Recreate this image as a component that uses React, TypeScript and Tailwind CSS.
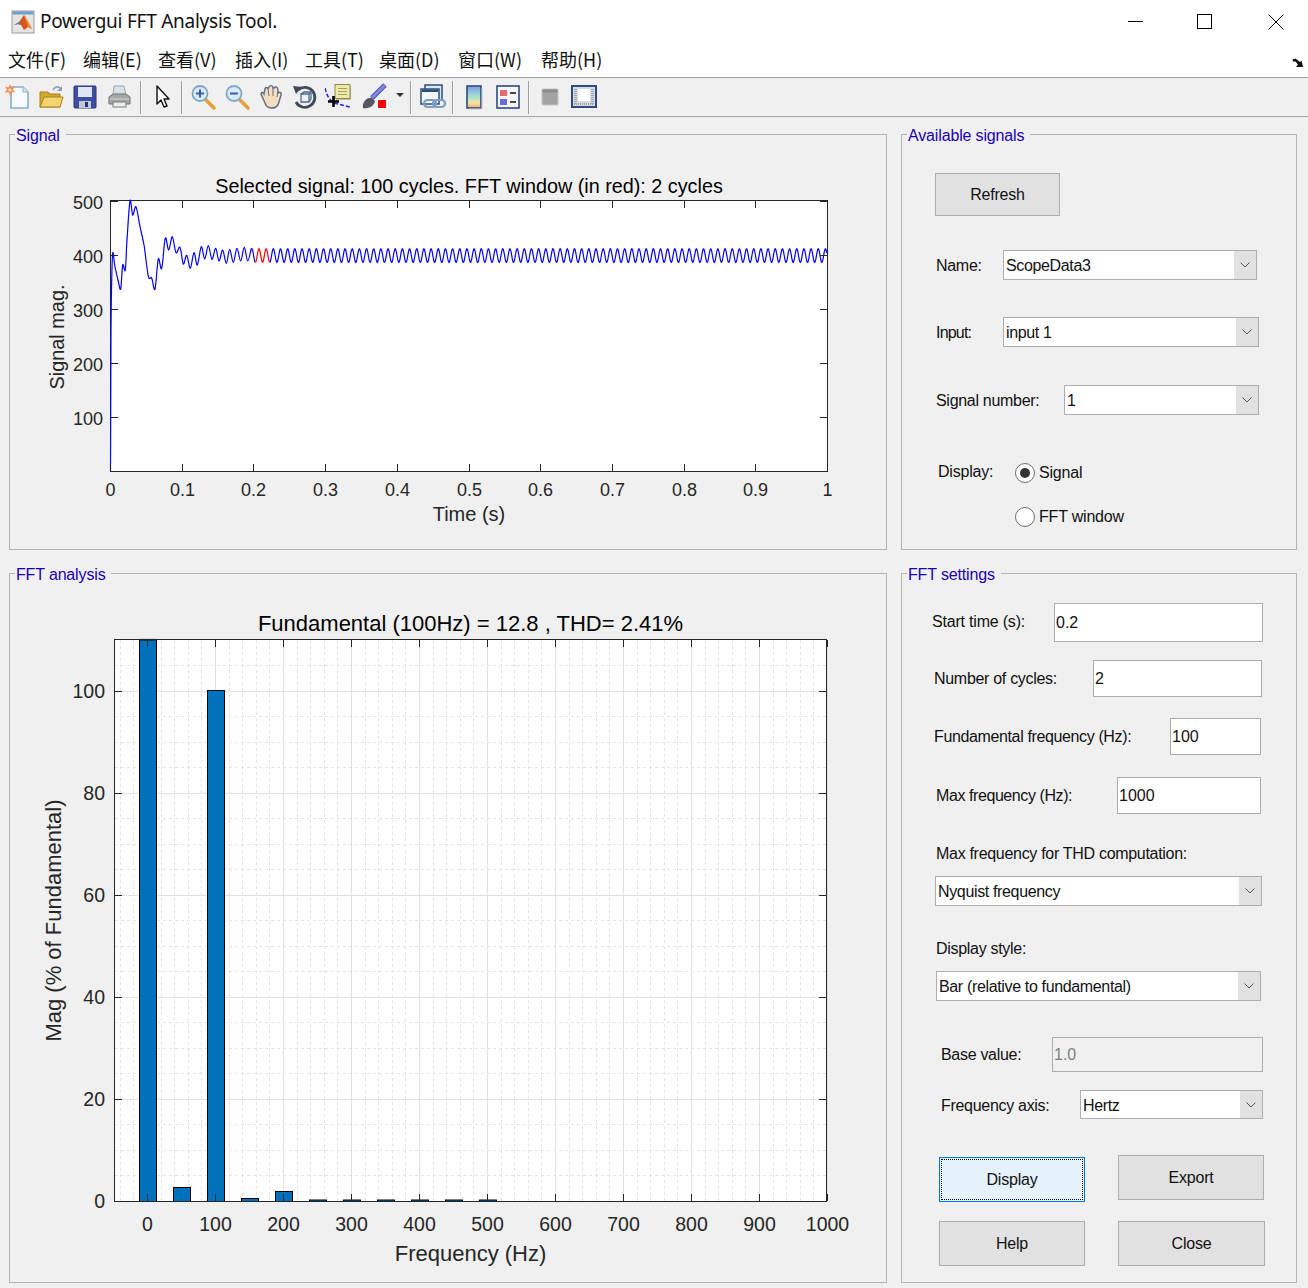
import type { ReactNode } from 'react'

const MENUS = [
  { texto: '文件(F)', ancho: 'w-[75px]' },
  { texto: '编辑(E)', ancho: 'w-[75px]' },
  { texto: '查看(V)', ancho: 'w-[77px]' },
  { texto: '插入(I)', ancho: 'w-[70px]' },
  { texto: '工具(T)', ancho: 'w-[74px]' },
  { texto: '桌面(D)', ancho: 'w-[79px]' },
  { texto: '窗口(W)', ancho: 'w-[83px]' },
  { texto: '帮助(H)', ancho: 'w-[70px]' },
]

function Logo() {
  return (
    <svg width="24" height="24" viewBox="0 0 24 24">
      <rect x="1" y="1" width="22" height="22" fill="#e4e4e4" stroke="#9a9a9a" />
      <rect x="1.5" y="1.5" width="21" height="3" fill="#6f9fc8" />
      <path d="M3 15 L8 12 L13 5 L16 10 L21 19 L17 17 L13 20 L10 15 L7 14 Z" fill="#d9531e" />
      <path d="M3 15 L8 12 L10 15 L7 14 Z" fill="#3d8fc4" />
      <path d="M13 5 L16 10 L21 19 L17 17 Z" fill="#f08c24" />
    </svg>
  )
}

function WindowButtons() {
  return (
    <div className="flex">
      <svg width="16" height="16" viewBox="0 0 16 16" className="mr-[53px] mt-[13px]">
        <path d="M0 8.5 H15" stroke="#000" />
      </svg>
      <svg width="16" height="16" viewBox="0 0 16 16" className="mr-[55px] mt-[14px]">
        <rect x="0.5" y="0.5" width="14" height="14" fill="none" stroke="#000" />
      </svg>
      <svg width="16" height="16" viewBox="0 0 16 16" className="mt-[14px]">
        <path d="M0.5 0.5 L15.5 15.5 M15.5 0.5 L0.5 15.5" stroke="#000" />
      </svg>
    </div>
  )
}

// iconos de la barra: todos en una caja de 28x28
const ICONS: Record<string, ReactNode> = {
  nuevo: (
    <>
      <path d="M8 4 H20 L25 9 V25 H8 Z" fill="#f7fbff" stroke="#88aecd" strokeWidth="1.6" />
      <path d="M20 4 V9 H25" fill="#d8e8f4" stroke="#88aecd" />
      <path d="M7 1 L8.5 4.5 L12 3.5 L10 6.5 L12.5 9.5 L9 9 L7 13 L5.5 9 L1.5 10 L4 6.5 L2 3.5 L5.5 4.5 Z" fill="#ef8f58" />
      <circle cx="7" cy="7" r="1.6" fill="#fbe3c8" />
    </>
  ),
  abrir: (
    <>
      <path d="M16 7 C18 3 22 3 24 6" fill="none" stroke="#8aa2b4" strokeWidth="1.6" />
      <path d="M25 3 V8 H20 Z" fill="#8aa2b4" />
      <path d="M3 9 H11 L13 11 H23 V24 H3 Z" fill="#d6a92e" stroke="#a47f1c" />
      <path d="M3 24 L7 14 H26 L23 24 Z" fill="#f3d36d" stroke="#a47f1c" />
    </>
  ),
  guardar: (
    <>
      <rect x="3" y="3" width="22" height="22" rx="1" fill="#3f4ea5" stroke="#2a3478" />
      <rect x="7" y="4" width="14" height="10" fill="#dfe5f3" />
      <rect x="8" y="18" width="12" height="7" fill="#c2c6d6" />
      <rect x="14" y="19" width="3" height="5" fill="#2a3478" />
    </>
  ),
  imprimir: (
    <>
      <path d="M9 3 H19 L21 12 H8 Z" fill="#d8e2ea" stroke="#9aa6ae" />
      <path d="M4 14 L8 11 H21 L25 14 V21 H4 Z" fill="#a5a8a8" stroke="#6f7272" />
      <rect x="8" y="19" width="13" height="5" fill="#ececec" stroke="#7c7c7c" />
      <path d="M5 16 H24" stroke="#d7d7d7" />
    </>
  ),
  puntero: (
    <path
      d="M9 3 V21 L13 17 L16 24 L19 23 L16 16 L21 16 Z"
      fill="#fff"
      stroke="#111"
      strokeWidth="1.4"
      strokeLinejoin="round"
    />
  ),
  zoomMas: (
    <>
      <path d="M17 17 L25 25" stroke="#e5a03c" strokeWidth="3.6" strokeLinecap="round" />
      <circle cx="11" cy="10.5" r="7.5" fill="#d9ebf7" stroke="#7fa9c6" strokeWidth="1.8" />
      <path d="M7 10.5 H15 M11 6.5 V14.5" stroke="#3a5fa8" strokeWidth="2" />
    </>
  ),
  zoomMenos: (
    <>
      <path d="M17 17 L25 25" stroke="#e5a03c" strokeWidth="3.6" strokeLinecap="round" />
      <circle cx="11" cy="10.5" r="7.5" fill="#d9ebf7" stroke="#7fa9c6" strokeWidth="1.8" />
      <path d="M7 10.5 H15" stroke="#3a5fa8" strokeWidth="2" />
    </>
  ),
  mano: (
    <>
      <path
        d="M4 11 C4 9 6 9 7 11 L8 6 C8 4 11 4 11 6 L12 4 C13 2 16 2 16 5 L17 5 C18 3 21 4 21 7 L21 10 C22 9 25 9 24 12 L22 19 C21 24 18 25 15 25 C11 25 9 23 8 20 Z"
        fill="#f7dcc4"
        stroke="#5c6f80"
        strokeWidth="1.4"
      />
      <path d="M11 6 L12 13 M16 5 L16 13 M21 8 L20 14" stroke="#5c6f80" />
    </>
  ),
  rotar: (
    <>
      <path d="M7 7 A10 10 0 1 1 5 19" fill="none" stroke="#3e4a58" strokeWidth="2.8" />
      <path d="M2 3 L11 4 L5 11 Z" fill="#3e4a58" />
      <path d="M10 11 H18 V19 H10 Z M10 11 L13 9 H20 L18 11 M20 9 V16 L18 19" fill="none" stroke="#4c6a8c" strokeWidth="1.3" />
    </>
  ),
  dato: (
    <>
      <path d="M0 5 C2 14 6 20 13 21 L25 24" fill="none" stroke="#2222ee" strokeWidth="1.5" strokeDasharray="4 2" />
      <rect x="11" y="3" width="15" height="14" fill="#8d8a50" opacity="0.5" />
      <rect x="10" y="1.5" width="15" height="14" fill="#efe9a8" stroke="#8d8a50" />
      <path d="M13 5.5 H22 M13 8.5 H22 M13 11.5 H22" stroke="#a6a36c" />
      <path d="M3 18.5 H14 M8.5 13 V24" stroke="#000" strokeWidth="2.6" />
    </>
  ),
  pincel: (
    <>
      <path d="M24 2 L11 15" stroke="#4a52a8" strokeWidth="5" />
      <path d="M24 2 L11 15" stroke="#8189e0" strokeWidth="3" />
      <path d="M2 25 C1 19 6 14 11 15 L14 18 C13 23 8 26 2 25 Z" fill="#55595f" />
      <rect x="16.5" y="16.5" width="9" height="9" fill="#ff0000" stroke="#fff" />
    </>
  ),
  enlace: (
    <>
      <rect x="7" y="2" width="17" height="15" fill="#dfe7f0" stroke="#2c4f80" strokeWidth="1.5" />
      <rect x="3" y="6" width="18" height="15" fill="#f5f7fa" stroke="#2c4f80" strokeWidth="1.5" />
      <path d="M4 6.5 H20 V9 H4 Z" fill="#2c4f80" />
      <rect x="6" y="17" width="12" height="7" rx="3.5" fill="none" stroke="#7c9dbd" strokeWidth="2.2" />
      <rect x="15" y="17" width="12" height="7" rx="3.5" fill="none" stroke="#7c9dbd" strokeWidth="2.2" />
    </>
  ),
  barraColor: (
    <>
      <defs>
        <linearGradient id="escala" x1="0" y1="0" x2="0" y2="1">
          <stop offset="0" stopColor="#7f9be0" />
          <stop offset="0.45" stopColor="#9fe0d8" />
          <stop offset="0.75" stopColor="#f0e6a0" />
          <stop offset="1" stopColor="#f0a878" />
        </linearGradient>
      </defs>
      <rect x="7" y="3" width="14" height="22" fill="url(#escala)" stroke="#2c4a80" strokeWidth="1.6" />
      <path d="M22 5 V26 H9" fill="none" stroke="#c0c4cc" />
    </>
  ),
  leyenda: (
    <>
      <rect x="3" y="3" width="22" height="22" fill="#f5f7fa" stroke="#2c4a80" strokeWidth="1.6" />
      <rect x="6" y="7" width="7" height="6" fill="#e86a6a" />
      <rect x="6" y="16" width="7" height="6" fill="#6a6ae8" />
      <path d="M16 10 H22 M16 19 H22" stroke="#111" strokeWidth="1.6" />
    </>
  ),
  ocultar: (
    <>
      <rect x="6" y="6" width="16" height="16" rx="1" fill="#a3a3a3" stroke="#c4c4c4" />
      <rect x="6.5" y="6.5" width="15" height="3" fill="#8c8c8c" />
    </>
  ),
  acoplar: (
    <>
      <rect x="2" y="3" width="24" height="21" fill="#d8dbe0" stroke="#2c4a80" strokeWidth="2" />
      <rect x="8" y="6" width="12" height="12" fill="#fff" />
      <path d="M5.5 6 V21 M22.5 6 V21" stroke="#9ea3a8" strokeDasharray="1 1" strokeWidth="3" />
      <path d="M4 21 H24" stroke="#9ea3a8" strokeDasharray="1 1" strokeWidth="2" />
    </>
  ),
}

function Herramienta({ nombre }: { nombre: string }) {
  return (
    <div className="flex w-[34px] items-center justify-center">
      <svg width="28" height="28" viewBox="0 0 28 28">
        {ICONS[nombre]}
      </svg>
    </div>
  )
}

function Separador({ className }: { className: string }) {
  return <div className={`h-[33px] w-[2px] self-center border-l border-[#a0a0a0] bg-[#f8f8f8] ${className}`} />
}

function Toolbar() {
  return (
    <div className="flex h-[40px] border-y border-[#a3a3a3] bg-[#f0f0f0]">
      <Herramienta nombre="nuevo" />
      <Herramienta nombre="abrir" />
      <Herramienta nombre="guardar" />
      <Herramienta nombre="imprimir" />
      <Separador className="ml-[4px] mr-[3px]" />
      <Herramienta nombre="puntero" />
      <Separador className="ml-[2px] mr-[3px]" />
      <Herramienta nombre="zoomMas" />
      <Herramienta nombre="zoomMenos" />
      <Herramienta nombre="mano" />
      <Herramienta nombre="rotar" />
      <Herramienta nombre="dato" />
      <div className="ml-[2px] flex">
        <Herramienta nombre="pincel" />
      </div>
      <div className="flex w-[16px] items-center justify-center">
        <div className="mb-[4px] h-0 w-0 border-x-[4px] border-t-[4px] border-x-transparent border-t-[#333]" />
      </div>
      <Separador className="ml-[2px] mr-[3px]" />
      <Herramienta nombre="enlace" />
      <Separador className="ml-[3px] mr-[3px]" />
      <Herramienta nombre="barraColor" />
      <Herramienta nombre="leyenda" />
      <Separador className="ml-[3px] mr-[3px]" />
      <Herramienta nombre="ocultar" />
      <Herramienta nombre="acoplar" />
    </div>
  )
}

function Panel({ titulo, className, children }: { titulo: string; className: string; children: ReactNode }) {
  return (
    <fieldset className={`border border-[#b4b4b4] ${className}`}>
      <legend className="relative top-[2px] ml-[5px] pl-[1px] pr-[6px] text-[16px] leading-[20px] tracking-[-0.15px] text-[#1a00b4]">
        {titulo}
      </legend>
      {children}
    </fieldset>
  )
}

function Seleccion({ valor, className }: { valor: string; className: string }) {
  return (
    <div className={`flex border border-[#adadad] bg-white ${className}`}>
      <span className="flex-1 pl-[2px] text-[16px] leading-[29px] tracking-[-0.35px]">{valor}</span>
      <span className="flex w-[22px] items-center justify-center bg-[#e1e1e1]">
        <svg width="12" height="8" viewBox="0 0 12 8">
          <path d="M1.5 1.5 L6 6 L10.5 1.5" fill="none" stroke="#555" />
        </svg>
      </span>
    </div>
  )
}

function Entrada({ valor, className }: { valor: string; className: string }) {
  return <div className={`flex items-center border border-[#adadad] bg-white pl-[1px] text-[16px] tracking-normal ${className}`}>{valor}</div>
}

function Boton({ texto, className }: { texto: string; className: string }) {
  return (
    <div className={`flex items-center justify-center border border-[#adadad] bg-[#e1e1e1] text-[16px] tracking-[-0.2px] ${className}`}>
      {texto}
    </div>
  )
}

function Radio({ activo, texto, className }: { activo: boolean; texto: string; className: string }) {
  return (
    <div className={`flex h-[20px] items-center gap-[4px] text-[16px] leading-[20px] tracking-[-0.2px] ${className}`}>
      <span className="flex h-[20px] w-[20px] items-center justify-center rounded-full border border-[#6e6e6e] bg-white">
        {activo && <span className="h-[10px] w-[10px] rounded-full bg-[#333]" />}
      </span>
      <span>{texto}</span>
    </div>
  )
}

function AvailableSignals() {
  return (
    <Panel titulo="Available signals" className="h-[426px] w-[396px]">
      <Boton texto="Refresh" className="ml-[33px] mt-[29px] h-[43px] w-[125px]" />
      <div className="mt-[34px] flex h-[30px] items-center pl-[34px] text-[16px] tracking-[-0.3px]">
        <span className="w-[67px] pt-[2px]">Name:</span>
        <Seleccion valor="ScopeData3" className="h-full w-[254px]" />
      </div>
      <div className="mt-[37px] flex h-[30px] items-center pl-[34px] text-[16px] tracking-[-0.3px]">
        <span className="w-[67px] pt-[2px] tracking-[-0.8px]">Input:</span>
        <Seleccion valor="input 1" className="h-full w-[256px]" />
      </div>
      <div className="mt-[38px] flex h-[30px] items-center pl-[34px] text-[16px] tracking-[-0.3px]">
        <span className="w-[128px] pt-[2px]">Signal number:</span>
        <Seleccion valor="1" className="h-full w-[195px]" />
      </div>
      <div className="mt-[48px] flex items-start pl-[36px] text-[16px] tracking-[-0.2px]">
        <span className="w-[77px] leading-[18px]">Display:</span>
        <Radio activo texto="Signal" className="" />
      </div>
      <Radio activo={false} texto="FFT window" className="ml-[113px] mt-[24px]" />
    </Panel>
  )
}

function FftSettings() {
  return (
    <Panel titulo="FFT settings" className="h-[720px] w-[396px] text-[16px]">
      <div className="tracking-[-0.3px]">
        <div className="mt-[20px] flex h-[39px] items-center pl-[30px]">
          <span className="w-[122px] pb-[2px] tracking-[-0.2px]">Start time (s):</span>
          <Entrada valor="0.2" className="h-full w-[209px]" />
        </div>
        <div className="mt-[18px] flex h-[37px] items-center pl-[32px]">
          <span className="w-[159px]">Number of cycles:</span>
          <Entrada valor="2" className="h-full w-[169px]" />
        </div>
        <div className="mt-[21px] flex h-[37px] items-center pl-[32px]">
          <span className="w-[236px] tracking-[-0.37px]">Fundamental frequency (Hz):</span>
          <Entrada valor="100" className="h-full w-[91px]" />
        </div>
        <div className="mt-[22px] flex h-[37px] items-center pl-[34px]">
          <span className="w-[181px] tracking-[-0.42px]">Max frequency (Hz):</span>
          <Entrada valor="1000" className="h-full w-[144px]" />
        </div>
        <div className="mt-[30px] h-[20px] pl-[34px] leading-[20px]">Max frequency for THD computation:</div>
        <Seleccion valor="Nyquist frequency" className="ml-[33px] mt-[12px] h-[30px] w-[327px]" />
        <div className="mt-[33px] h-[20px] pl-[34px] leading-[20px]">Display style:</div>
        <Seleccion valor="Bar (relative to fundamental)" className="ml-[34px] mt-[12px] h-[30px] w-[325px]" />
        <div className="mt-[36px] flex h-[35px] items-center pl-[39px]">
          <span className="w-[111px]">Base value:</span>
          <div className="flex h-full w-[211px] items-center border border-[#adadad] pl-[1px] tracking-normal text-[#808080]">1.0</div>
        </div>
        <div className="mt-[18px] flex h-[29px] items-center pl-[39px]">
          <span className="w-[139px] pt-[3px]">Frequency axis:</span>
          <Seleccion valor="Hertz" className="h-full w-[183px]" />
        </div>
      </div>
      <div className="mt-[36px] flex items-start">
        <div className="ml-[37px] mt-[2px] flex h-[45px] w-[146px] items-center justify-center border border-[#0078d7] bg-[#e5f1fb] tracking-[-0.2px] outline-1 outline-offset-[-3px] outline-black outline-dotted">
          Display
        </div>
        <Boton texto="Export" className="ml-[33px] h-[45px] w-[146px]" />
      </div>
      <div className="mt-[19px] flex items-start">
        <Boton texto="Help" className="ml-[37px] h-[45px] w-[146px]" />
        <Boton texto="Close" className="ml-[33px] h-[45px] w-[147px]" />
      </div>
    </Panel>
  )
}

const TINTA = '#262626'

// puntos del transitorio leídos de la captura, en coordenadas de página
const TRANSITORIO: [number, number][] = [
  [111, 330], [111.5, 290], [112.7, 253], [115, 267], [118, 280], [120.7, 289], [122.7, 265], [125.3, 270], [127, 240],
  [130, 200.7], [132.7, 215], [136, 206.7], [140, 226.7], [144, 245], [148.3, 276], [151.7, 278], [155, 289],
  [158.3, 259], [161.7, 268.3], [165.3, 238.3], [168.7, 250], [172.3, 236.7], [176, 252.7], [180, 247.3], [183.3, 264],
  [186.7, 255.3], [190.3, 268.3], [194, 252.7], [197.3, 265], [201.3, 246.7], [204.7, 259], [208.3, 245.7], [212, 259.3],
  [215.7, 248.3], [219, 261], [222.7, 250], [226.3, 263.3], [229.7, 249.3], [233.3, 262.3], [237, 248.3], [240.7, 261],
  [244.3, 247.3], [247.7, 261], [251.3, 248.3],
]

function onda(desde: number, hasta: number) {
  const puntos: string[] = []
  for (let x = desde; x <= hasta; x += 0.5) {
    const y = 255.6 - 6.8 * Math.cos((2 * Math.PI * (x - 259)) / 7.17)
    puntos.push(`${x},${y.toFixed(2)}`)
  }
  return puntos
}

function curvaSuave(pts: [number, number][]) {
  let d = `M110.5 471 L${pts[0][0]} ${pts[0][1]}`
  for (let i = 0; i < pts.length - 1; i++) {
    const p0 = pts[Math.max(i - 1, 0)]
    const p1 = pts[i]
    const p2 = pts[i + 1]
    const p3 = pts[Math.min(i + 2, pts.length - 1)]
    const c1x = p1[0] + (p2[0] - p0[0]) / 6
    const c1y = p1[1] + (p2[1] - p0[1]) / 6
    const c2x = p2[0] - (p3[0] - p1[0]) / 6
    const c2y = p2[1] - (p3[1] - p1[1]) / 6
    d += ` C${c1x.toFixed(1)} ${c1y.toFixed(1)} ${c2x.toFixed(1)} ${c2y.toFixed(1)} ${p2[0]} ${p2[1]}`
  }
  return d
}

function SignalChart() {
  const xs = [0, 0.1, 0.2, 0.3, 0.4, 0.5, 0.6, 0.7, 0.8, 0.9, 1]
  const ys = [500, 400, 300, 200, 100]
  const px = (v: number) => Math.round(110 + v * 717) + 0.5
  const py = (v: number) => Math.round(201 + (500 - v) * 0.54) + 0.5
  return (
    <svg width="875" height="404" viewBox="10 144 875 404">
      <rect x="110.5" y="200.5" width="717" height="271" fill="#fff" stroke={TINTA} />
      <path d={curvaSuave(TRANSITORIO)} fill="none" stroke="#0000ff" strokeWidth="1.2" />
      <polyline points={onda(251.3, 255.4).join(' ')} fill="none" stroke="#0000ff" strokeWidth="1.2" />
      <polyline points={onda(255.4, 269.8).join(' ')} fill="none" stroke="#ff0000" strokeWidth="1.2" />
      <polyline points={onda(269.8, 827).join(' ')} fill="none" stroke="#0000ff" strokeWidth="1.2" />
      {xs.map((v) => (
        <g key={v}>
          <path d={`M${px(v)} 201 V208 M${px(v)} 471 V464`} stroke={TINTA} />
          <text x={px(v)} y="496" textAnchor="middle" fontSize="18" fill={TINTA}>
            {v}
          </text>
        </g>
      ))}
      {ys.map((v) => (
        <g key={v}>
          <path d={`M111 ${py(v)} H118 M827 ${py(v)} H820`} stroke={TINTA} />
          <text x="103" y={py(v) + 7} textAnchor="end" fontSize="18" fill={TINTA}>
            {v}
          </text>
        </g>
      ))}
      <text x="469" y="193" textAnchor="middle" fontSize="19.8" fill="#000">
        Selected signal: 100 cycles. FFT window (in red): 2 cycles
      </text>
      <text x="469" y="521" textAnchor="middle" fontSize="20" fill={TINTA}>
        Time (s)
      </text>
      <text transform="translate(64 337) rotate(-90)" textAnchor="middle" fontSize="19.9" fill={TINTA}>
        Signal mag.
      </text>
    </svg>
  )
}

// altura de cada barra como y superior; la base es 1201
const BARRAS: [number, number][] = [
  [139.5, 640], [173.5, 1187.5], [207.5, 690.5], [241.5, 1198.5], [275.5, 1191.5], [309.5, 1200], [343.5, 1200],
  [377.5, 1200], [411.5, 1200], [445.5, 1200], [479.5, 1200],
]

function FftChart() {
  const xs = [0, 100, 200, 300, 400, 500, 600, 700, 800, 900, 1000]
  const ys = [0, 20, 40, 60, 80, 100]
  const menoresX = Array.from({ length: 53 }, (_, i) => -40 + i * 20).filter((v) => v % 100 !== 0)
  const menoresY = Array.from({ length: 22 }, (_, i) => i * 5).filter((v) => v % 20 !== 0 && v > 0)
  const px = (v: number) => Math.round(147 + v * 0.68) + 0.5
  const py = (v: number) => Math.round(1201 - v * 5.105) + 0.5
  return (
    <svg width="875" height="699" viewBox="10 583 875 699">
      <rect x="114.5" y="639.5" width="712" height="562" fill="#fff" />
      {menoresX.map((v) => (
        <path key={v} d={`M${px(v)} 640 V1201`} stroke="#e4e4e4" strokeDasharray="3 3" />
      ))}
      {menoresY.map((v) => (
        <path key={v} d={`M115 ${py(v)} H826`} stroke="#e4e4e4" strokeDasharray="3 3" />
      ))}
      {xs.map((v) => (
        <path key={v} d={`M${px(v)} 640 V1201`} stroke="#e0e0e0" />
      ))}
      {ys.map((v) => (
        <path key={v} d={`M115 ${py(v)} H826`} stroke="#e0e0e0" />
      ))}
      <rect x="139.5" y="638" width="17" height="3" fill="#d9d9d9" />
      {BARRAS.map(([x, y]) => (
        <rect key={x} x={x} y={y} width="17" height={1201.5 - y} fill="#0072bd" stroke="#000" strokeWidth="1" />
      ))}
      <rect x="114.5" y="639.5" width="712" height="562" fill="none" stroke={TINTA} />
      {xs.map((v) => (
        <g key={v}>
          <path d={`M${px(v)} 640 V647 M${px(v)} 1201 V1194`} stroke={TINTA} />
          <text x={px(v)} y="1231" textAnchor="middle" fontSize="19.5" fill={TINTA}>
            {v}
          </text>
        </g>
      ))}
      {ys.map((v) => (
        <g key={v}>
          <path d={`M115 ${py(v)} H122 M826 ${py(v)} H819`} stroke={TINTA} />
          <text x="105" y={py(v) + 6.5} textAnchor="end" fontSize="19.5" fill={TINTA}>
            {v}
          </text>
        </g>
      ))}
      <text x="470.5" y="631" textAnchor="middle" fontSize="22" fill="#000">
        Fundamental (100Hz) = 12.8 , THD= 2.41%
      </text>
      <text x="470.5" y="1261" textAnchor="middle" fontSize="22" fill={TINTA}>
        Frequency (Hz)
      </text>
      <text transform="translate(61 920.5) rotate(-90)" textAnchor="middle" fontSize="22" fill={TINTA}>
        Mag (% of Fundamental)
      </text>
    </svg>
  )
}

export default function App() {
  return (
    <div className="h-[1288px] w-[1308px] overflow-hidden bg-[#f0f0f0] text-[#111] [font-family:'Liberation_Sans',sans-serif]">
      <div className="flex h-[40px] items-start justify-between bg-white pr-[24px]">
        <div className="flex items-center pl-[11px] pt-[10px]">
          <Logo />
          <span className="-mt-[2px] ml-[5px] text-[19px] leading-[24px] tracking-[-0.25px] [font-family:'Noto_Sans','Liberation_Sans',sans-serif]">
            Powergui FFT Analysis Tool.
          </span>
        </div>
        <WindowButtons />
      </div>
      <div className="flex h-[37px] items-center justify-between bg-white pl-[8px] pr-[4px]">
        <div className="flex pt-[2px] text-[18px] [font-family:'Noto_Sans_CJK_SC','Noto_Sans',sans-serif]">
          {MENUS.map((m) => (
            <span key={m.texto} className={m.ancho}>
              {m.texto}
            </span>
          ))}
        </div>
        <svg width="12" height="10" viewBox="0 0 12 10" className="mt-[8px]">
          <path d="M0.5 1.5 L3.5 0.5 L8 4 L9.5 2.5 L11 9 L4 9 L6 6.5 L3.5 3.5 L1 3.5 Z" fill="#111" />
        </svg>
      </div>
      <Toolbar />
      <div className="flex gap-[14px] pl-[9px] pt-[7px]">
        <div className="flex w-[878px] flex-col gap-[13px]">
          <Panel titulo="Signal" className="h-[426px] w-full">
            <SignalChart />
          </Panel>
          <Panel titulo="FFT analysis" className="h-[720px] w-full">
            <FftChart />
          </Panel>
        </div>
        <div className="flex flex-col gap-[13px]">
          <AvailableSignals />
          <FftSettings />
        </div>
      </div>
    </div>
  )
}
